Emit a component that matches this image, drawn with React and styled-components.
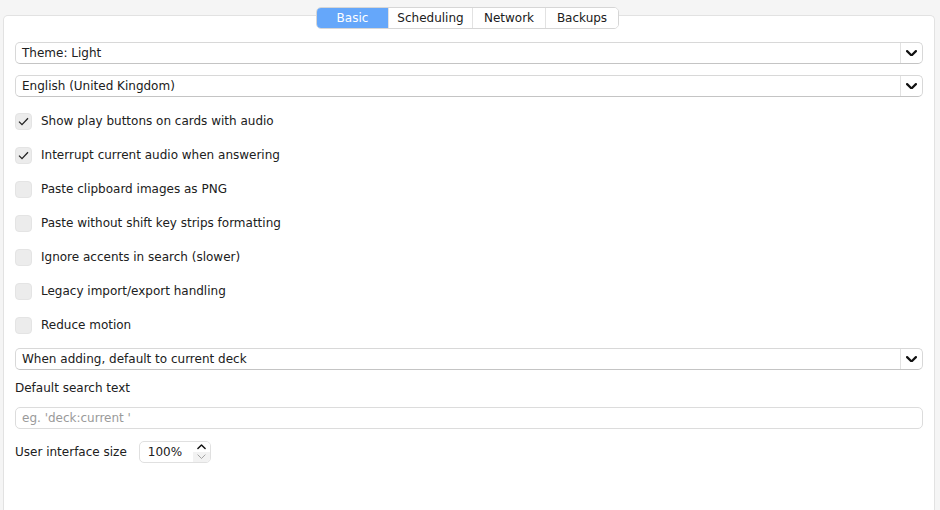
import React from 'react';
import styled, { createGlobalStyle } from 'styled-components';

const GlobalStyle = createGlobalStyle`
  html, body {
    margin: 0;
    padding: 0;
    background: #f5f5f5;
    font-family: "DejaVu Sans", "Noto Sans", sans-serif;
    font-size: 12px;
    color: #202020;
  }
`;

const Page = styled.div`
  height: 510px;
  overflow: hidden;
  padding: 15px 5px 0 3px;
  box-sizing: border-box;
`;

const Panel = styled.div`
  background: #fff;
  border: 1px solid #e2e2e2;
  border-bottom: none;
  border-radius: 5px 5px 0 0;
  height: 100%;
  box-sizing: border-box;
  padding: 0 11px 0 11px;
`;

const TabBar = styled.div`
  display: flex;
  justify-content: center;
  margin-top: -9px;
`;

const Tabs = styled.div`
  display: flex;
  border: 1px solid #d6d6d6;
  border-radius: 5px;
  background: #fff;
  overflow: hidden;
  height: 22px;
  box-sizing: border-box;
  margin-right: 3px;
`;

const Tab = styled.div`
  display: flex;
  align-items: center;
  justify-content: center;
  width: ${p => p.$w}px;
  background: ${p => (p.$active ? '#65a7fa' : '#fff')};
  color: ${p => (p.$active ? '#fff' : '#202020')};
  border-left: ${p => (p.$first ? 'none' : '1px solid #e2e2e2')};
  font-size: 12px;
`;

const SelectBox = styled.div`
  display: flex;
  height: 22px;
  box-sizing: border-box;
  border: 1px solid #d8d8d8;
  border-bottom-color: #c4c4c4;
  border-radius: 5px;
  margin-top: ${p => p.$mt}px;
  background: #fff;
`;

const SelectLabel = styled.div`
  flex: 1;
  display: flex;
  align-items: center;
  padding-left: 6px;
`;

const SelectArrow = styled.div`
  width: 21px;
  display: flex;
  align-items: center;
  justify-content: center;
  border-left: 1px solid #e2e2e2;
`;

const CheckList = styled.div`
  margin-top: 7px;
  display: flex;
  flex-direction: column;
`;

const CheckRow = styled.div`
  height: 34px;
  display: flex;
  align-items: center;
  gap: 9px;
`;

const Box = styled.div`
  width: 17px;
  height: 17px;
  border-radius: 4px;
  background: #ececec;
  border: 1px solid #e4e4e4;
  box-sizing: border-box;
  display: flex;
  align-items: center;
  justify-content: center;
`;

const FieldLabel = styled.div`
  margin-top: ${p => p.$mt}px;
  line-height: 14px;
`;

const TextInput = styled.input`
  display: block;
  width: 100%;
  height: 22px;
  box-sizing: border-box;
  margin-top: 12px;
  border: 1px solid #dcdcdc;
  border-radius: 5px;
  padding: 0 6px;
  font: inherit;
  color: #202020;
  outline: none;
  &::placeholder {
    color: #9a9a9a;
  }
`;

const SizeRow = styled.div`
  display: flex;
  align-items: center;
  gap: 12px;
  margin-top: 12px;
`;

const SpinBox = styled.div`
  display: flex;
  width: 72px;
  height: 22px;
  box-sizing: border-box;
  border: 1px solid #e0e0e0;
  border-radius: 5px;
  overflow: hidden;
`;

const SpinValue = styled.div`
  flex: 1;
  display: flex;
  align-items: center;
  padding-left: 8px;
`;

const SpinArrows = styled.div`
  width: 17px;
  display: flex;
  flex-direction: column;
`;

const SpinHalf = styled.div`
  flex: 1;
  display: flex;
  align-items: center;
  justify-content: center;
  background: ${p => (p.$down ? '#f2f2f2' : '#fff')};
`;

const Chevron = ({ up, color = '#111', w = 11, sw = 2 }) => (
  <svg width={w} height={w * 0.6} viewBox="0 0 10 6">
    <path
      d={up ? 'M1 5 L5 1 L9 5' : 'M1 1 L5 5 L9 1'}
      fill="none"
      stroke={color}
      strokeWidth={sw}
      strokeLinecap="round"
      strokeLinejoin="round"
    />
  </svg>
);

const Check = () => (
  <svg width="11" height="9" viewBox="0 0 11 9">
    <path d="M1 4.6 L4 7.6 L10 1.2" fill="none" stroke="#222" strokeWidth="1.3" />
  </svg>
);

const Select = ({ children, mt }) => (
  <SelectBox $mt={mt}>
    <SelectLabel>{children}</SelectLabel>
    <SelectArrow>
      <Chevron />
    </SelectArrow>
  </SelectBox>
);

const options = [
  ['Show play buttons on cards with audio', true],
  ['Interrupt current audio when answering', true],
  ['Paste clipboard images as PNG', false],
  ['Paste without shift key strips formatting', false],
  ['Ignore accents in search (slower)', false],
  ['Legacy import/export handling', false],
  ['Reduce motion', false],
];

export default function App() {
  return (
    <>
      <GlobalStyle />
      <Page>
        <Panel>
          <TabBar>
            <Tabs>
              <Tab $w={71} $active $first>Basic</Tab>
              <Tab $w={83}>Scheduling</Tab>
              <Tab $w={72}>Network</Tab>
              <Tab $w={72}>Backups</Tab>
            </Tabs>
          </TabBar>

          <Select mt={13}>Theme: Light</Select>
          <Select mt={11}>English (United Kingdom)</Select>

          <CheckList>
            {options.map(([label, on]) => (
              <CheckRow key={label}>
                <Box>{on && <Check />}</Box>
                <span>{label}</span>
              </CheckRow>
            ))}
          </CheckList>

          <Select mt={6}>When adding, default to current deck</Select>

          <FieldLabel $mt={11}>Default search text</FieldLabel>
          <TextInput placeholder="eg. 'deck:current '" />

          <SizeRow>
            <span>User interface size</span>
            <SpinBox>
              <SpinValue>100%</SpinValue>
              <SpinArrows>
                <SpinHalf>
                  <Chevron up w={9} sw={1.6} />
                </SpinHalf>
                <SpinHalf $down>
                  <Chevron w={9} sw={1} color="#999" />
                </SpinHalf>
              </SpinArrows>
            </SpinBox>
          </SizeRow>
        </Panel>
      </Page>
    </>
  );
}
